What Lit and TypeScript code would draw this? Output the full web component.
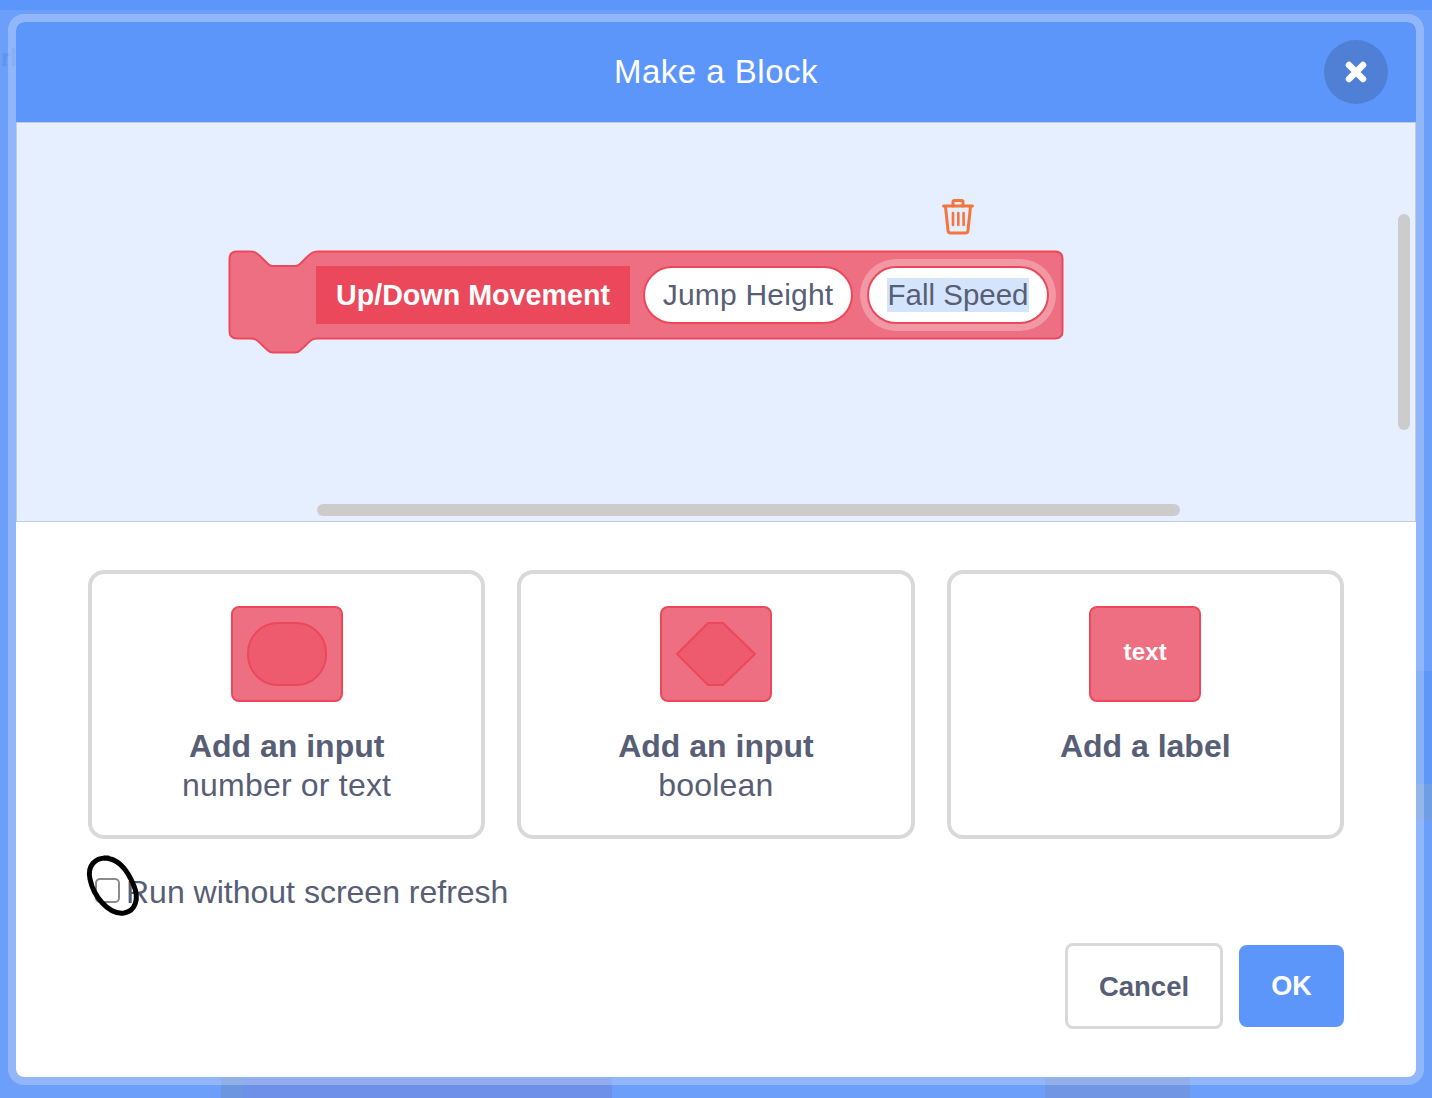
import { LitElement, html, css } from "lit";
import { customElement } from "lit/decorators.js";

const BLOCK = "M229.5 259 Q229.5 251.5 237 251.5 H250 C256 251.5 258 254 262 258 L268 264 Q270 266 273 266 H295 Q298 266 300 264 L306 258 C310 254 312 251.5 318 251.5 H1055 Q1062.5 251.5 1062.5 259 V331 Q1062.5 338.5 1055 338.5 H318 C312 338.5 310 341 306 345 L300 350.5 Q298 352.5 295 352.5 H273 Q270 352.5 268 350.5 L262 345 C258 341 256 338.5 250 338.5 H237 Q229.5 338.5 229.5 331 Z";

@customElement("app-root")
export class AppRoot extends LitElement {
  static styles = css`
    :host { display: block; }
    * { box-sizing: border-box; }
    .page {
      position: relative; width: 1432px; height: 1098px; overflow: hidden;
      background: #6c9ff9; padding: 14px 8px 0;
      font-family: "Liberation Sans", Arial, sans-serif; color: #575e75;
    }
    .topband { position: absolute; left: 0; top: 0; width: 100%; height: 10px; background: #5d96fa; }
    .ghost { position: absolute; bottom: 0; height: 20px; background: #6e90e8; }
    .g0 { left: 221px; width: 22px; background: #6c96e0; }
    .g1 { left: 243px; width: 369px; }
    .g2 { left: 1045px; width: 145px; background: #7096e4; }
    .side { position: absolute; left: 1416px; width: 16px; }
    .s1 { top: 671px; height: 113px; background: #5f97f7; }
    .s2 { top: 784px; height: 36px; background: #709ee5; }
    .ghosttext { position: absolute; left: 1px; top: 44px; font-size: 24px; font-weight: 700; color: #6193f0; }
    .dialog {
      position: relative; width: 1416px; height: 1071px;
      border: 8px solid rgba(255,255,255,.25); border-radius: 16px;
      background: #fff; background-clip: padding-box;
      display: flex; flex-direction: column; overflow: hidden;
    }
    .header {
      flex: 0 0 100px; background: #5d96fa; color: #fff;
      display: flex; align-items: center; justify-content: center; position: relative;
      font-size: 33px; letter-spacing: .5px;
    }
    .close {
      position: absolute; right: 28px; top: 18px; width: 64px; height: 64px; border-radius: 50%;
      background: #4f80d6; display: flex; align-items: center; justify-content: center;
    }
    .workspace {
      flex: 0 0 400px; position: relative; background: #e5efff;
      border: 1px solid #c4ccd9; overflow: hidden;
    }
    .trash { position: absolute; left: 924px; top: 75px; }
    .blockwrap { position: absolute; left: 211px; top: 127px; width: 836px; height: 104px; }
    .blockwrap svg { position: absolute; left: 0; top: 0; }
    .blockrow {
      position: relative; display: flex; align-items: center;
      padding: 0 0 0 88px; height: 90px;
    }
    .label {
      background: #ec485b; color: #fff; font-weight: 700; font-size: 28.7px;
      width: 314px; height: 58px; display: flex; align-items: center; justify-content: center;
    }
    .pill {
      height: 58px; border-radius: 30px; border: 2px solid #ec485b; background: #fff;
      display: flex; align-items: center; justify-content: center; font-size: 30px;
    }
    .jump { width: 210px; margin-left: 13px; letter-spacing: .2px; }
    .fall { width: 182px; margin-left: 14px; box-shadow: 0 0 0 7px rgba(255,255,255,.28); font-size: 29.5px; }
    .sel { background: #d5e4fd; }
    .vbar { position: absolute; left: 1381px; top: 91px; width: 12px; height: 216px; background: #ccc; border-radius: 6px; }
    .hbar { position: absolute; left: 300px; top: 381px; width: 863px; height: 12px; background: #ccc; border-radius: 6px; }
    .body { flex: 1; padding: 48px 72px 0; display: flex; flex-direction: column; position: relative; }
    .cards { display: flex; gap: 32px; }
    .card {
      width: 397.3px; height: 269px; border: 4px solid #d9d9d9; border-radius: 16px;
      display: flex; flex-direction: column; align-items: center; padding-top: 32px;
      font-size: 32px; line-height: 40px;
    }
    .icon {
      width: 112px; height: 96px; border: 2px solid #ec485b; border-radius: 8px; background: #ee6f82;
      display: flex; align-items: center; justify-content: center; margin-bottom: 24px;
      color: #fff; font-weight: 700; font-size: 24px; letter-spacing: .2px; padding-bottom: 4px;
    }
    .icon svg { display: block; margin-top: 4px; }
    .title { font-weight: 700; }
    .sub { letter-spacing: .2px; margin-top: -1px; }
    .check {
      display: flex; align-items: center; height: 40px; margin-top: 33px; margin-left: 7px;
      font-size: 32px; letter-spacing: 0; gap: 6px;
    }
    .box { width: 25px; height: 25px; border: 2px solid #8b8b8b; border-radius: 5px; background: #fff; margin-top: -4px; }
    .ring { position: absolute; left: 64px; top: 328px; }
    .buttons { display: flex; justify-content: flex-end; align-items: center; gap: 16px; margin-top: 31px; }
    .btn {
      display: flex; align-items: center; justify-content: center; font-weight: 700; border-radius: 8px;
    }
    .cancel { width: 158px; height: 86px; border: 3px solid #d9d9d9; font-size: 27.5px; padding-top: 1px; }
    .ok { width: 105px; height: 82px; background: #5d96fa; color: #fff; font-size: 27px; padding-top: 1px; }
  `;

  render() {
    return html`
      <div class="page">
        <div class="topband"></div>
        <div class="ghosttext">rl</div>
        <div class="ghost g0"></div>
        <div class="ghost g1"></div>
        <div class="ghost g2"></div>
        <div class="side s1"></div>
        <div class="side s2"></div>
        <div class="dialog">
          <div class="header">
            Make a Block
            <div class="close">
              <svg width="24" height="24" viewBox="0 0 24 24">
                <path d="M5 5 L19 19 M19 5 L5 19" stroke="#fff" stroke-width="6.5" stroke-linecap="round" fill="none"/>
              </svg>
            </div>
          </div>
          <div class="workspace">
            <svg class="trash" width="34" height="38" viewBox="0 0 34 38" fill="none" stroke="#f2763d" stroke-width="3" stroke-linecap="round" stroke-linejoin="round">
              <path d="M2.5 8 H31.5"/>
              <path d="M12 8 V4 Q12 2.5 13.5 2.5 H20.5 Q22 2.5 22 4 V8"/>
              <path d="M4.5 8.5 L7 32.5 Q7.2 35 9.5 35 H24.5 Q26.8 35 27 32.5 L29.5 8.5"/>
              <path d="M12 15 V27 M17.3 15 V27 M22.6 15 V27" stroke-width="2.6"/>
            </svg>
            <div class="blockwrap">
              <svg width="836" height="104" viewBox="228 250 836 104">
                <path d=${BLOCK} fill="#ee6f82" stroke="#ec485b" stroke-width="2"/>
              </svg>
              <div class="blockrow">
                <div class="label">Up/Down Movement</div>
                <div class="pill jump">Jump Height</div>
                <div class="pill fall"><span class="sel">Fall Speed</span></div>
              </div>
            </div>
            <div class="vbar"></div>
            <div class="hbar"></div>
          </div>
          <div class="body">
            <div class="cards">
              <div class="card">
                <div class="icon">
                  <svg width="80" height="64" viewBox="0 0 80 64"><rect x="1" y="1" width="78" height="62" rx="30" fill="#ee5a6e" stroke="#ec485b" stroke-width="2"/></svg>
                </div>
                <div class="title">Add an input</div>
                <div class="sub">number or text</div>
              </div>
              <div class="card">
                <div class="icon">
                  <svg width="80" height="64" viewBox="0 0 80 64"><path d="M1 32 L32 1 H47 L79 32 L47 63 H32 Z" fill="#ee5a6e" stroke="#ec485b" stroke-width="2" stroke-linejoin="round"/></svg>
                </div>
                <div class="title">Add an input</div>
                <div class="sub">boolean</div>
              </div>
              <div class="card">
                <div class="icon">text</div>
                <div class="title">Add a label</div>
              </div>
            </div>
            <div class="check"><span class="box"></span><span>Run without screen refresh</span></div>
            <svg class="ring" width="70" height="70" viewBox="80 850 70 70" fill="none" stroke="#000" stroke-width="5" stroke-linecap="round">
              <path d="M108 858 C95 857 87 866 90 879 C93 895 108 915 124 913 C136 911 139 898 134 886 C128 871 118 858 104 858"/>
            </svg>
            <div class="buttons">
              <div class="btn cancel">Cancel</div>
              <div class="btn ok">OK</div>
            </div>
          </div>
        </div>
      </div>
    `;
  }
}
